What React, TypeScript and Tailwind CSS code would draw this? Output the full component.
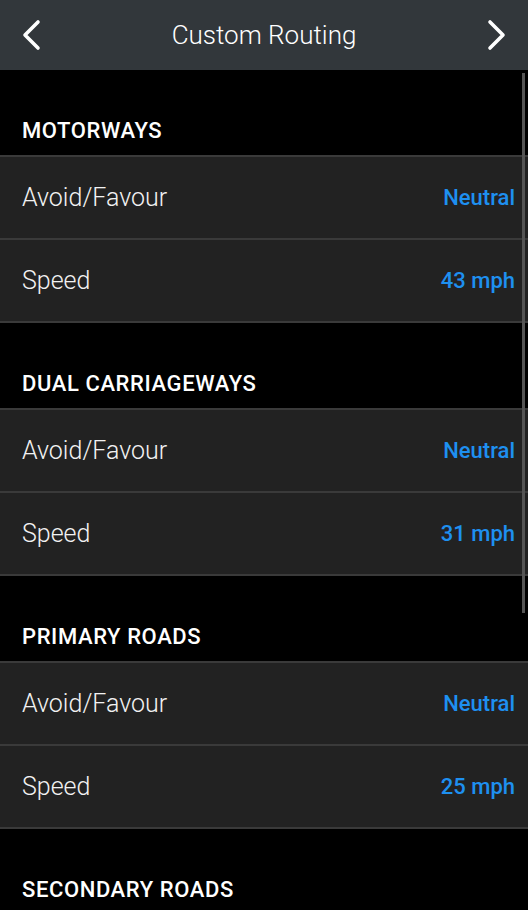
import React from 'react'

const sections = [
  { title: 'MOTORWAYS', avoid: 'Neutral', speed: '43 mph' },
  { title: 'DUAL CARRIAGEWAYS', avoid: 'Neutral', speed: '31 mph' },
  { title: 'PRIMARY ROADS', avoid: 'Neutral', speed: '25 mph' },
]

function Chevron({ dir }: { dir: 'left' | 'right' }) {
  return (
    <svg width="22" height="32" viewBox="0 0 22 32" fill="none">
      <path
        d={dir === 'left' ? 'M18 3 L5 16 L18 29' : 'M4 3 L17 16 L4 29'}
        stroke="white"
        strokeWidth="3.6"
        strokeLinecap="round"
        strokeLinejoin="round"
      />
    </svg>
  )
}

function SectionTitle({ title }: { title: string }) {
  return (
    <div className="flex h-[85px] items-end pb-[8px] pl-[22px]">
      <span className="text-[22px] font-medium tracking-[0.6px] text-white">{title}</span>
    </div>
  )
}

function Row({ label, value, last }: { label: string; value: string; last?: boolean }) {
  return (
    <div
      className={`flex items-center justify-between border-t-2 border-[#3a3a3a] bg-[#222222] pl-[22px] pr-[13px] ${last ? 'h-[85px] border-b-2' : 'h-[83px]'}`}
    >
      <span className="text-[25px] font-light text-[#f2f2f2]">{label}</span>
      <span className="text-[22px] font-medium text-[#1e90f0]">{value}</span>
    </div>
  )
}

export default function App() {
  return (
    <div
      className="relative h-[910px] w-[528px] overflow-hidden bg-black"
      style={{ fontFamily: 'Roboto, "Liberation Sans", sans-serif' }}
    >
      <div className="flex h-[70px] items-center justify-between bg-[#32373b] px-[20px]">
        <Chevron dir="left" />
        <span className="text-[26px] font-light text-white">Custom Routing</span>
        <Chevron dir="right" />
      </div>
      <div className="flex flex-col">
        {sections.map((s) => (
          <div key={s.title}>
            <SectionTitle title={s.title} />
            <Row label="Avoid/Favour" value={s.avoid} />
            <Row label="Speed" value={s.speed} last />
          </div>
        ))}
        <SectionTitle title="SECONDARY ROADS" />
      </div>
      <div className="absolute left-[522px] top-[73px] h-[540px] w-[3px] bg-[#555555]" />
    </div>
  )
}
